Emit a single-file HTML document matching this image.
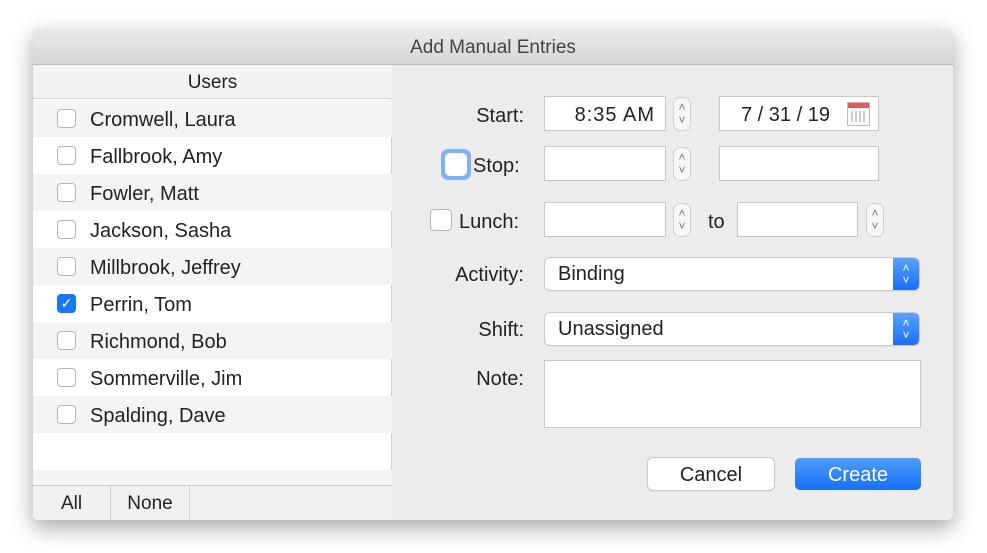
<!DOCTYPE html>
<html><head><style>
*{box-sizing:border-box;margin:0;padding:0}
body{width:987px;height:553px;background:#fff;font-family:"Liberation Sans",sans-serif;color:#222;position:relative;overflow:hidden}
.a{position:absolute}
.win{left:33px;top:28px;width:920px;height:492px;background:#ececec;border-radius:6px;box-shadow:0 8px 22px rgba(0,0,0,.35);overflow:hidden}
.title{left:0;top:0;width:920px;height:37px;background:linear-gradient(#ebebeb,#d6d6d6);border-bottom:1px solid #bdbdbd;text-align:center;font-size:19px;line-height:40px;color:#444}
.left{left:0;top:37px;width:359px;height:455px;background:#fff;border-right:1px solid #cfcfcf}
.hdr{left:0;top:0;width:359px;height:34px;background:#f3f3f3;border-bottom:1px solid #d6d6d6;text-align:center;font-size:19px;line-height:36px;color:#222}
.row{left:0;width:359px;height:37px;font-size:20px;line-height:40px;padding-left:57px}
.row.g{background:#f4f4f4}
.cb{position:absolute;left:24px;top:9px;width:19px;height:19px;border:1px solid #b5b5b5;border-radius:4px;background:#fff}
.foot{left:0;top:420px;width:359px;height:35px;background:#f0f0f0;border-top:1px solid #cfcfcf;font-size:19px;line-height:36px}
.fld{background:#fff;border:1px solid #c8c8c8;font-size:20px;line-height:36px}
.stp{width:18px;height:34px;border:1px solid #cfcfcf;border-radius:7px;background:#f6f6f6;font-size:12px;color:#777;text-align:center;line-height:13px;padding-top:3px}
.lbl{font-size:20px;text-align:right;width:120px}
.pop{background:#fff;border-radius:5px;box-shadow:0 0 0 1px #c9c9c9,0 1px 1px #bbb;font-size:20px;line-height:33px;padding-left:13px;overflow:hidden}
.pb{position:absolute;right:0;top:0;width:26px;height:32px;background:linear-gradient(#5aa2fb,#1a6ef5);color:#fff;font-size:12px;line-height:12px;text-align:center;padding-top:4px}
.btn{height:32px;border-radius:5px;font-size:20px;line-height:34px;text-align:center}
</style></head><body>
<div class="a win">
 <div class="a title">Add Manual Entries</div>
 <div class="a left">
  <div class="a hdr">Users</div>
  <div class="a row g" style="top:35px"><div class="cb"></div>Cromwell, Laura</div>
  <div class="a row" style="top:72px"><div class="cb"></div>Fallbrook, Amy</div>
  <div class="a row g" style="top:109px"><div class="cb"></div>Fowler, Matt</div>
  <div class="a row" style="top:146px"><div class="cb"></div>Jackson, Sasha</div>
  <div class="a row g" style="top:183px"><div class="cb"></div>Millbrook, Jeffrey</div>
  <div class="a row" style="top:220px"><div class="cb" style="background:#1b78f2;border-color:#1b78f2;color:#fff;font-size:14px;line-height:17px;text-align:center">✓</div>Perrin, Tom</div>
  <div class="a row g" style="top:257px"><div class="cb"></div>Richmond, Bob</div>
  <div class="a row" style="top:294px"><div class="cb"></div>Sommerville, Jim</div>
  <div class="a row g" style="top:331px"><div class="cb"></div>Spalding, Dave</div>
  <div class="a row" style="top:368px"></div>
  <div class="a row g" style="top:405px;height:15px"></div>
  <div class="a foot">
   <div class="a" style="left:0;width:78px;text-align:center;border-right:1px solid #d0d0d0;height:35px">All</div>
   <div class="a" style="left:78px;width:79px;text-align:center;border-right:1px solid #d0d0d0;height:35px">None</div>
  </div>
 </div>
</div>
<div class="a lbl" style="left:404px;top:105px">Start:</div>
<div class="a fld" style="left:544px;top:96px;width:122px;height:35px;text-align:right;padding-right:10px;letter-spacing:1px">8:35 AM</div>
<div class="a stp" style="left:673px;top:97px">˄<br>˅</div>
<div class="a fld" style="left:719px;top:96px;width:160px;height:35px;padding-left:21px">7 / 31 / 19</div>
<div class="a" style="left:847px;top:102px;width:23px;height:24px;border:1px solid #bbb;background:#fafafa"><div style="height:5px;background:#e05b5b"></div><div style="margin:3px 3px;height:11px;background:repeating-linear-gradient(90deg,#ccc 0 2px,transparent 2px 4px)"></div></div>

<div class="a" style="left:441px;top:149px;width:30px;height:31px;border-radius:7px;background:#7fb1f7"></div>
<div class="a" style="left:445px;top:153px;width:22px;height:23px;border-radius:5px;background:#fff"></div>
<div class="a" style="left:473px;top:155px;font-size:20px">Stop:</div>
<div class="a fld" style="left:544px;top:146px;width:122px;height:35px"></div>
<div class="a stp" style="left:673px;top:147px">˄<br>˅</div>
<div class="a fld" style="left:719px;top:146px;width:160px;height:35px"></div>

<div class="a" style="left:430px;top:209px;width:22px;height:22px;border:1px solid #b5b5b5;border-radius:4px;background:#fff"></div>
<div class="a" style="left:459px;top:211px;font-size:20px">Lunch:</div>
<div class="a fld" style="left:544px;top:202px;width:122px;height:35px"></div>
<div class="a stp" style="left:673px;top:203px">˄<br>˅</div>
<div class="a" style="left:708px;top:211px;font-size:20px">to</div>
<div class="a fld" style="left:737px;top:202px;width:121px;height:35px"></div>
<div class="a stp" style="left:866px;top:203px">˄<br>˅</div>

<div class="a lbl" style="left:404px;top:264px">Activity:</div>
<div class="a pop" style="left:545px;top:258px;width:374px;height:32px">Binding<div class="pb">˄<br>˅</div></div>
<div class="a lbl" style="left:404px;top:319px">Shift:</div>
<div class="a pop" style="left:545px;top:313px;width:374px;height:32px">Unassigned<div class="pb">˄<br>˅</div></div>
<div class="a lbl" style="left:404px;top:368px">Note:</div>
<div class="a fld" style="left:544px;top:360px;width:377px;height:68px"></div>

<div class="a btn" style="left:648px;top:458px;width:126px;background:#fff;box-shadow:0 0 0 1px #c9c9c9,0 1px 1px #bbb">Cancel</div>
<div class="a btn" style="left:795px;top:458px;width:126px;background:linear-gradient(#4f9cfb,#1670f5);color:#fff">Create</div>
</body></html>
